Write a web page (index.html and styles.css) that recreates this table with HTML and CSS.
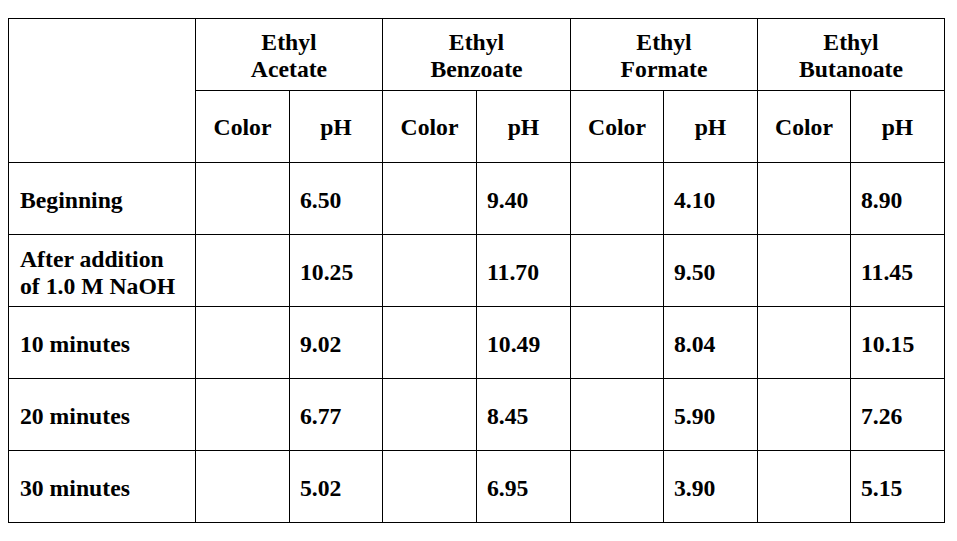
FILE: index.html
```html
<!DOCTYPE html>
<html lang="en">
<head>
    <meta charset="UTF-8">
    <title>Ester Hydrolysis Data</title>
    <link rel="stylesheet" href="styles.css">
</head>
<body>
    <table class="data-table">
        <colgroup>
            <col class="col-label">
            <col class="col-a"><col class="col-b">
            <col class="col-a"><col class="col-a">
            <col class="col-b"><col class="col-a">
            <col class="col-b"><col class="col-a">
        </colgroup>
        <thead>
            <tr>
                <th rowspan="2"></th>
                <th colspan="2">Ethyl<br>Acetate</th>
                <th colspan="2">Ethyl<br>Benzoate</th>
                <th colspan="2">Ethyl<br>Formate</th>
                <th colspan="2">Ethyl<br>Butanoate</th>
            </tr>
            <tr>
                <th>Color</th><th>pH</th>
                <th>Color</th><th>pH</th>
                <th>Color</th><th>pH</th>
                <th>Color</th><th>pH</th>
            </tr>
        </thead>
        <tbody>
            <tr>
                <td class="label">Beginning</td>
                <td></td><td>6.50</td>
                <td></td><td>9.40</td>
                <td></td><td>4.10</td>
                <td></td><td>8.90</td>
            </tr>
            <tr>
                <td class="label">After addition<br>of 1.0 M NaOH</td>
                <td></td><td>10.25</td>
                <td></td><td>11.70</td>
                <td></td><td>9.50</td>
                <td></td><td>11.45</td>
            </tr>
            <tr>
                <td class="label">10 minutes</td>
                <td></td><td>9.02</td>
                <td></td><td>10.49</td>
                <td></td><td>8.04</td>
                <td></td><td>10.15</td>
            </tr>
            <tr>
                <td class="label">20 minutes</td>
                <td></td><td>6.77</td>
                <td></td><td>8.45</td>
                <td></td><td>5.90</td>
                <td></td><td>7.26</td>
            </tr>
            <tr>
                <td class="label">30 minutes</td>
                <td></td><td>5.02</td>
                <td></td><td>6.95</td>
                <td></td><td>3.90</td>
                <td></td><td>5.15</td>
            </tr>
        </tbody>
    </table>
</body>
</html>
```

FILE: styles.css
```css
* {
    margin: 0;
    padding: 0;
    box-sizing: border-box;
}

body {
    font-family: 'Liberation Serif', 'Times New Roman', serif;
    background: white;
    color: black;
    padding: 18px 0 0 8px;
}

.data-table {
    border-collapse: collapse;
    table-layout: fixed;
    width: 937px;
    font-size: 23.7px;
    font-weight: 700;
    line-height: 27px;
}

.col-label {
    width: 187px;
}

.col-a {
    width: 94px;
}

.col-b {
    width: 93px;
}

.data-table th,
.data-table td {
    border: 1px solid black;
    height: 72px;
    vertical-align: middle;
    padding-top: 2px;
}

.data-table th {
    text-align: center;
    font-weight: 700;
}

.data-table td {
    text-align: left;
    padding-top: 4px;
    padding-left: 10px;
}

.data-table td.label {
    padding-left: 11px;
}
```
